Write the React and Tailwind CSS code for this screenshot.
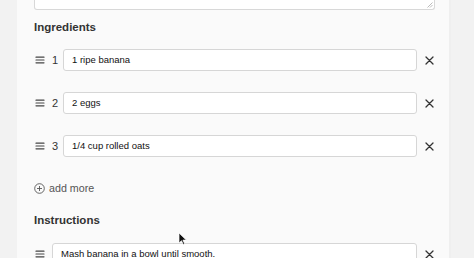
import React from "react";

const ingredients = ["1 ripe banana", "2 eggs", "1/4 cup rolled oats"];

function Grip() {
  return (
    <svg width="10" height="8" viewBox="0 0 10 8" className="shrink-0">
      <path d="M1 1.2h8M1 4h8M1 6.8h8" stroke="#444" strokeWidth="1.2" strokeLinecap="round" />
    </svg>
  );
}

function Cross() {
  return (
    <svg width="9" height="9" viewBox="0 0 9 9" className="shrink-0">
      <path d="M1 1l7 7M8 1l-7 7" stroke="#333" strokeWidth="1.3" strokeLinecap="round" />
    </svg>
  );
}

export default function App() {
  return (
    <div className="relative min-h-screen bg-[#f2f2f2] font-['Liberation_Sans',Arial,sans-serif] text-[#222] overflow-hidden">
      <div className="ml-[17px] w-[434px] min-h-[258px] bg-[#fafafa] border-r-[2px] border-[#efefef] pl-[17px] pr-[14px]">
        <div className="relative h-[10px] bg-white border border-t-0 border-[#d8d8d8] rounded-b-[3px]">
          <svg width="6" height="6" viewBox="0 0 6 6" className="absolute right-[1px] bottom-[1px]">
            <path d="M5.5 0.5L0.5 5.5M5.5 3L3 5.5" stroke="#aaa" strokeWidth="0.8" />
          </svg>
        </div>

        <h2 className="mt-[10px] text-[11.5px] leading-[14px] font-bold text-[#333]">Ingredients</h2>

        <div className="mt-[15px] flex flex-col gap-[21px]">
          {ingredients.map((item, i) => (
            <div key={item} className="flex items-center h-[22px]">
              <span className="ml-[1px]"><Grip /></span>
              <span className="ml-[7px] w-[10px] text-[11px] text-[#333]">{i + 1}</span>
              <div className="ml-[1px] flex-1 h-[22px] bg-white border border-[#d6d6d6] rounded-[3px] flex items-center px-[8px] text-[9.5px] text-[#111]">
                {item}
              </div>
              <span className="ml-[8px] mr-[1px]"><Cross /></span>
            </div>
          ))}
        </div>

        <div className="mt-[24px] h-[14px] flex items-center gap-[4px] text-[10.7px] text-[#555]">
          <svg width="11" height="11" viewBox="0 0 11 11" className="shrink-0">
            <circle cx="5.5" cy="5.5" r="4.8" fill="none" stroke="#555" strokeWidth="0.9" />
            <path d="M5.5 3v5M3 5.5h5" stroke="#555" strokeWidth="0.9" />
          </svg>
          <span>add more</span>
        </div>

        <h2 className="mt-[18px] text-[11.5px] leading-[14px] font-bold text-[#333]">Instructions</h2>

        <div className="mt-[16px] flex items-center h-[22px]">
          <span className="ml-[1px]"><Grip /></span>
          <div className="ml-[7px] flex-1 h-[22px] bg-white border border-[#d6d6d6] rounded-[3px] flex items-center px-[8px] text-[9.5px] text-[#111]">
            Mash banana in a bowl until smooth.
          </div>
          <span className="ml-[8px] mr-[1px]"><Cross /></span>
        </div>
      </div>

      <svg width="9" height="13" viewBox="0 0 9 13" className="absolute left-[178px] top-[232px]">
        <path d="M1 1v10l2.5-2.3 1.8 3.8 1.4-.7-1.8-3.7H8.3z" fill="#111" stroke="#fff" strokeWidth="0.7" />
      </svg>
    </div>
  );
}
